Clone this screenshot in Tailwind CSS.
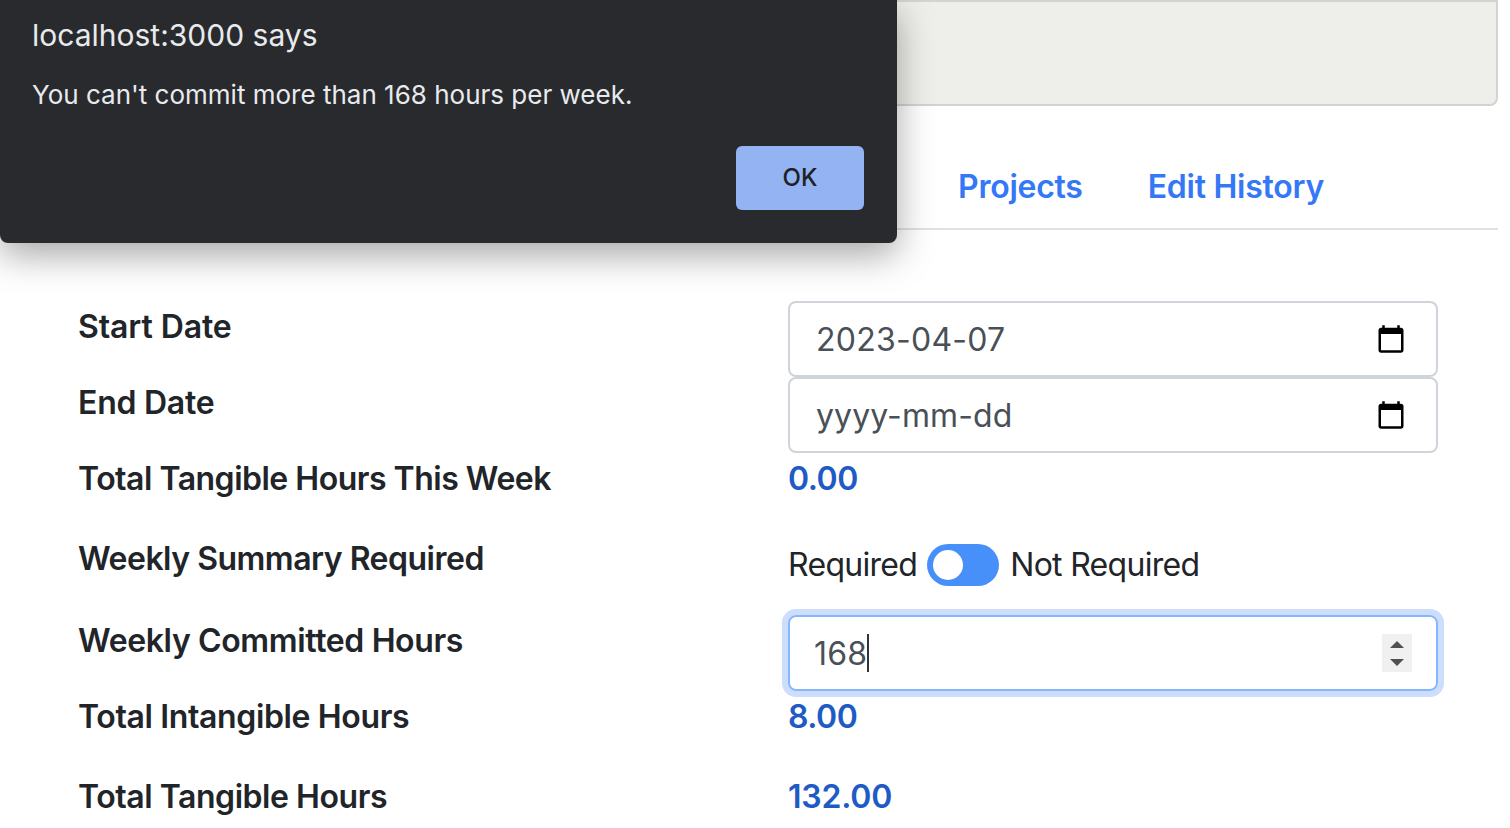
<!DOCTYPE html>
<html lang="en">
  <head>
    <meta charset="UTF-8" />
    <meta name="viewport" content="width=device-width, initial-scale=1.0" />
    <script src="https://cdn.jsdelivr.net/npm/@tailwindcss/browser@4"></script>
    <title>Profile</title>
  </head>
  <body class="bg-white overflow-hidden font-['Inter',sans-serif] text-[#212529]">
    <main class="relative w-[1510px] h-[828px] overflow-hidden">
      <!-- top banner -->
      <div class="w-[1498px] h-[106px] bg-[#eeeeea] border-2 border-[#d3d3d0] rounded-b-lg"></div>

      <!-- tabs -->
      <nav class="w-[1498px] h-[124px] border-b-2 border-[#dee2e6] flex items-start pl-[958px] pt-[56px] gap-[65px] text-[32px] leading-[50px] font-semibold tracking-[-0.25px] text-[#3578f6]">
        <a>Projects</a>
        <a>Edit History</a>
      </nav>

      <!-- form rows -->
      <section class="pl-[78px] pt-[73px] text-[32px] leading-[48px]">
        <div class="flex h-[76px]">
          <div class="w-[710px] font-semibold tracking-[-0.1px]">Start Date</div>
          <div class="w-[650px] h-[76px] -mt-[2px] border-2 border-[#ced4da] rounded-lg flex items-center justify-between pl-[26px] pr-[30px] text-[#495057]">
            <span class="pt-[2px] tracking-[0.25px]">2023-04-07</span>
            <svg class="w-[30px] h-[30px]" viewBox="0 0 24 24" fill="#000"><path d="M20 3h-1V1h-2v2H7V1H5v2H4c-1.1 0-2 .9-2 2v16c0 1.1.9 2 2 2h16c1.1 0 2-.9 2-2V5c0-1.1-.9-2-2-2zm0 18H4V8h16v13z"/></svg>
          </div>
        </div>
        <div class="flex h-[76px]">
          <div class="w-[710px] font-semibold tracking-[-0.25px]">End Date</div>
          <div class="w-[650px] h-[76px] -mt-[2px] border-2 border-[#ced4da] rounded-lg flex items-center justify-between pl-[26px] pr-[30px] text-[#495057]">
            <span class="pt-[2px] tracking-[0.1px]">yyyy-mm-dd</span>
            <svg class="w-[30px] h-[30px]" viewBox="0 0 24 24" fill="#000"><path d="M20 3h-1V1h-2v2H7V1H5v2H4c-1.1 0-2 .9-2 2v16c0 1.1.9 2 2 2h16c1.1 0 2-.9 2-2V5c0-1.1-.9-2-2-2zm0 18H4V8h16v13z"/></svg>
          </div>
        </div>
        <div class="flex h-[80px]">
          <div class="w-[710px] font-semibold tracking-[-0.5px]">Total Tangible Hours This Week</div>
          <div class="font-semibold tracking-[-0.5px] text-[#1f5bc4]">0.00</div>
        </div>
        <div class="flex h-[82px]">
          <div class="w-[710px] font-semibold tracking-[-0.5px]">Weekly Summary Required</div>
          <div class="flex items-center h-[60px] tracking-[-0.7px]">
            <span>Required</span>
            <span class="relative w-[72px] h-[42px] ml-[10px] mr-[11px] -mt-[1px] rounded-full bg-[#4790f9]">
              <span class="absolute left-[6px] top-[6px] w-[30px] h-[30px] rounded-full bg-white"></span>
            </span>
            <span>Not Required</span>
          </div>
        </div>
        <div class="flex h-[76px]">
          <div class="w-[710px] font-semibold tracking-[-0.37px]">Weekly Committed Hours</div>
          <div class="relative w-[650px] h-[76px] -mt-[2px] border-2 border-[#86b7fe] rounded-lg ring-[6px] ring-[#cddefd] flex items-center pl-[24px] text-[#495057]">
            <span class="pt-[2px] tracking-[0.2px]">168</span>
            <span class="w-[2px] h-[38px] bg-[#333]"></span>
            <span class="absolute left-[592px] top-[17px] w-[30px] h-[38px] bg-[#f0f0f0] flex flex-col items-center justify-center gap-[11px]">
              <svg class="w-[14px] h-[7px]" viewBox="0 0 14 7" fill="#505050"><path d="M7 0l7 7H0z"/></svg>
              <svg class="w-[14px] h-[7px]" viewBox="0 0 14 7" fill="#505050"><path d="M0 0h14L7 7z"/></svg>
            </span>
          </div>
        </div>
        <div class="flex h-[80px]">
          <div class="w-[710px] font-semibold tracking-[-0.36px]">Total Intangible Hours</div>
          <div class="font-semibold tracking-[-0.5px] text-[#1f5bc4]">8.00</div>
        </div>
        <div class="flex h-[55px]">
          <div class="w-[710px] font-semibold tracking-[-0.45px]">Total Tangible Hours</div>
          <div class="font-semibold tracking-[-0.2px] text-[#1f5bc4]">132.00</div>
        </div>
      </section>

      <!-- alert dialog -->
      <div class="absolute left-0 top-0 w-[897px] h-[243px] bg-[#292a2d] rounded-b-lg shadow-[0_12px_36px_rgba(0,0,0,0.35)] text-[#e8eaed]">
        <p class="absolute left-[32px] top-[15px] text-[30px] leading-[40px]">localhost:3000 says</p>
        <p class="absolute left-[32px] top-[76px] text-[26px] leading-[38px]">You can't commit more than 168 hours per week.</p>
        <button class="absolute left-[736px] top-[146px] w-[128px] h-[64px] rounded-md bg-[#94b3f2] text-[#202124] text-[24px] font-medium">OK</button>
      </div>
    </main>
  </body>
</html>
